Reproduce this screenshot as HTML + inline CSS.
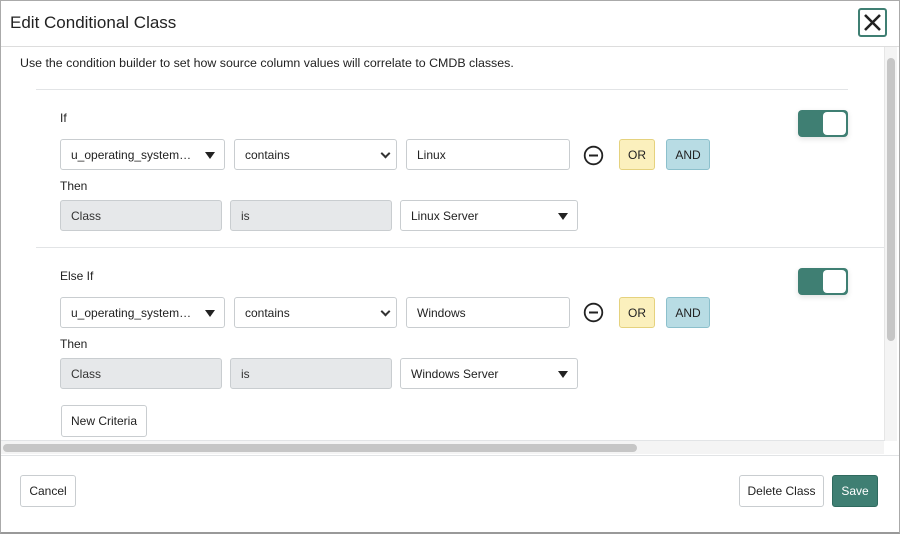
<!DOCTYPE html>
<html><head><style>
*{box-sizing:border-box;margin:0;padding:0}
body{width:900px;height:534px;background:#fff;font-family:"Liberation Sans",sans-serif;color:#222;position:relative;overflow:hidden}
.a{position:absolute}
.box{position:absolute;border:1px solid #c9cdd0;border-radius:3px;background:#fff;font-size:12px;display:flex;align-items:center;padding-left:10px;color:#222}
.gray{background:#e6e8ea;color:#333}
.lbl{position:absolute;font-size:12px;color:#222}
.btn{position:absolute;border:1px solid #c9cdd0;border-radius:3px;background:#fff;font-size:12px;display:flex;align-items:center;justify-content:center}
.tri{position:absolute;right:9px;top:12px;width:0;height:0;border-left:5.5px solid transparent;border-right:5.5px solid transparent;border-top:7px solid #222}
.chev{position:absolute;right:7px;top:10px;width:7px;height:7px;border-right:2px solid #333;border-bottom:2px solid #333;transform:rotate(45deg)}
.tog{position:absolute;width:50px;height:27px;background:#3f7f73;border-radius:4px;box-shadow:0 2px 6px rgba(0,0,0,.12)}
.tog div{position:absolute;right:2px;top:2px;width:23px;height:23px;background:#fff;border-radius:4px}
.line{position:absolute;height:1px;background:#e2e4e6}
</style></head><body>
<div class="a" style="left:0;top:0;width:900px;height:534px;border:1px solid #aaa;border-bottom:2px solid #999"></div>
<div class="a" style="left:10px;top:13px;font-size:17px;color:#222">Edit Conditional Class</div>
<div class="a" style="left:858px;top:8px;width:29px;height:29px;border:2px solid #3f7f73;border-radius:3px">
<svg width="25" height="25" viewBox="0 0 25 25" style="position:absolute;left:0;top:0"><path d="M5 5L20 20M20 5L5 20" stroke="#222" stroke-width="2.6"/></svg></div>
<div class="line" style="left:1px;top:46px;width:898px;background:#ddd"></div>
<div class="a" style="left:20px;top:56px;font-size:12.4px">Use the condition builder to set how source column values will correlate to CMDB classes.</div>
<div class="line" style="left:36px;top:89px;width:812px"></div>
<div class="a" style="left:884px;top:47px;width:13px;height:394px;background:#f4f4f4;border-left:1px solid #e6e6e6"></div>
<div class="a" style="left:887px;top:58px;width:8px;height:283px;background:#c6c6c6;border-radius:4px"></div>

<div class="lbl" style="left:60px;top:111px">If</div>
<div class="tog" style="left:798px;top:110px"><div></div></div>
<div class="box" style="left:60px;top:139px;width:165px;height:31px">u_operating_system…<span class="tri"></span></div>
<div class="box" style="left:234px;top:139px;width:163px;height:31px">contains<span class="chev"></span></div>
<div class="box" style="left:406px;top:139px;width:164px;height:31px">Linux</div>
<svg class="a" style="left:583px;top:145px" width="21" height="21"><circle cx="10.5" cy="10.5" r="8.8" fill="none" stroke="#222" stroke-width="1.8"/><path d="M6 10.5H15" stroke="#222" stroke-width="2"/></svg>
<div class="btn" style="left:619px;top:139px;width:36px;height:31px;background:#fbf0bd;border-color:#e5d27e">OR</div>
<div class="btn" style="left:666px;top:139px;width:44px;height:31px;background:#b8dce4;border-color:#8cc0cc">AND</div>
<div class="lbl" style="left:60px;top:179px">Then</div>
<div class="box gray" style="left:60px;top:200px;width:162px;height:31px">Class</div>
<div class="box gray" style="left:230px;top:200px;width:162px;height:31px">is</div>
<div class="box" style="left:400px;top:200px;width:178px;height:31px">Linux Server<span class="tri"></span></div>
<div class="line" style="left:36px;top:247px;width:848px"></div>

<div class="lbl" style="left:60px;top:269px">Else If</div>
<div class="tog" style="left:798px;top:268px"><div></div></div>
<div class="box" style="left:60px;top:297px;width:165px;height:31px">u_operating_system…<span class="tri"></span></div>
<div class="box" style="left:234px;top:297px;width:163px;height:31px">contains<span class="chev"></span></div>
<div class="box" style="left:406px;top:297px;width:164px;height:31px">Windows</div>
<svg class="a" style="left:583px;top:302px" width="21" height="21"><circle cx="10.5" cy="10.5" r="8.8" fill="none" stroke="#222" stroke-width="1.8"/><path d="M6 10.5H15" stroke="#222" stroke-width="2"/></svg>
<div class="btn" style="left:619px;top:297px;width:36px;height:31px;background:#fbf0bd;border-color:#e5d27e">OR</div>
<div class="btn" style="left:666px;top:297px;width:44px;height:31px;background:#b8dce4;border-color:#8cc0cc">AND</div>
<div class="lbl" style="left:60px;top:337px">Then</div>
<div class="box gray" style="left:60px;top:358px;width:162px;height:31px">Class</div>
<div class="box gray" style="left:230px;top:358px;width:162px;height:31px">is</div>
<div class="box" style="left:400px;top:358px;width:178px;height:31px">Windows Server<span class="tri"></span></div>
<div class="btn" style="left:61px;top:405px;width:86px;height:32px">New Criteria</div>

<div class="line" style="left:1px;top:440px;width:884px"></div>
<div class="a" style="left:1px;top:441px;width:883px;height:13px;background:#f4f4f4"></div>
<div class="a" style="left:3px;top:444px;width:634px;height:8px;background:#c6c6c6;border-radius:4px"></div>
<div class="line" style="left:1px;top:455px;width:898px"></div>

<div class="btn" style="left:20px;top:475px;width:56px;height:32px">Cancel</div>
<div class="btn" style="left:739px;top:475px;width:85px;height:32px">Delete Class</div>
<div class="btn" style="left:832px;top:475px;width:46px;height:32px;background:#3f7f73;border-color:#2f6a5f;color:#fff">Save</div>
</body></html>
